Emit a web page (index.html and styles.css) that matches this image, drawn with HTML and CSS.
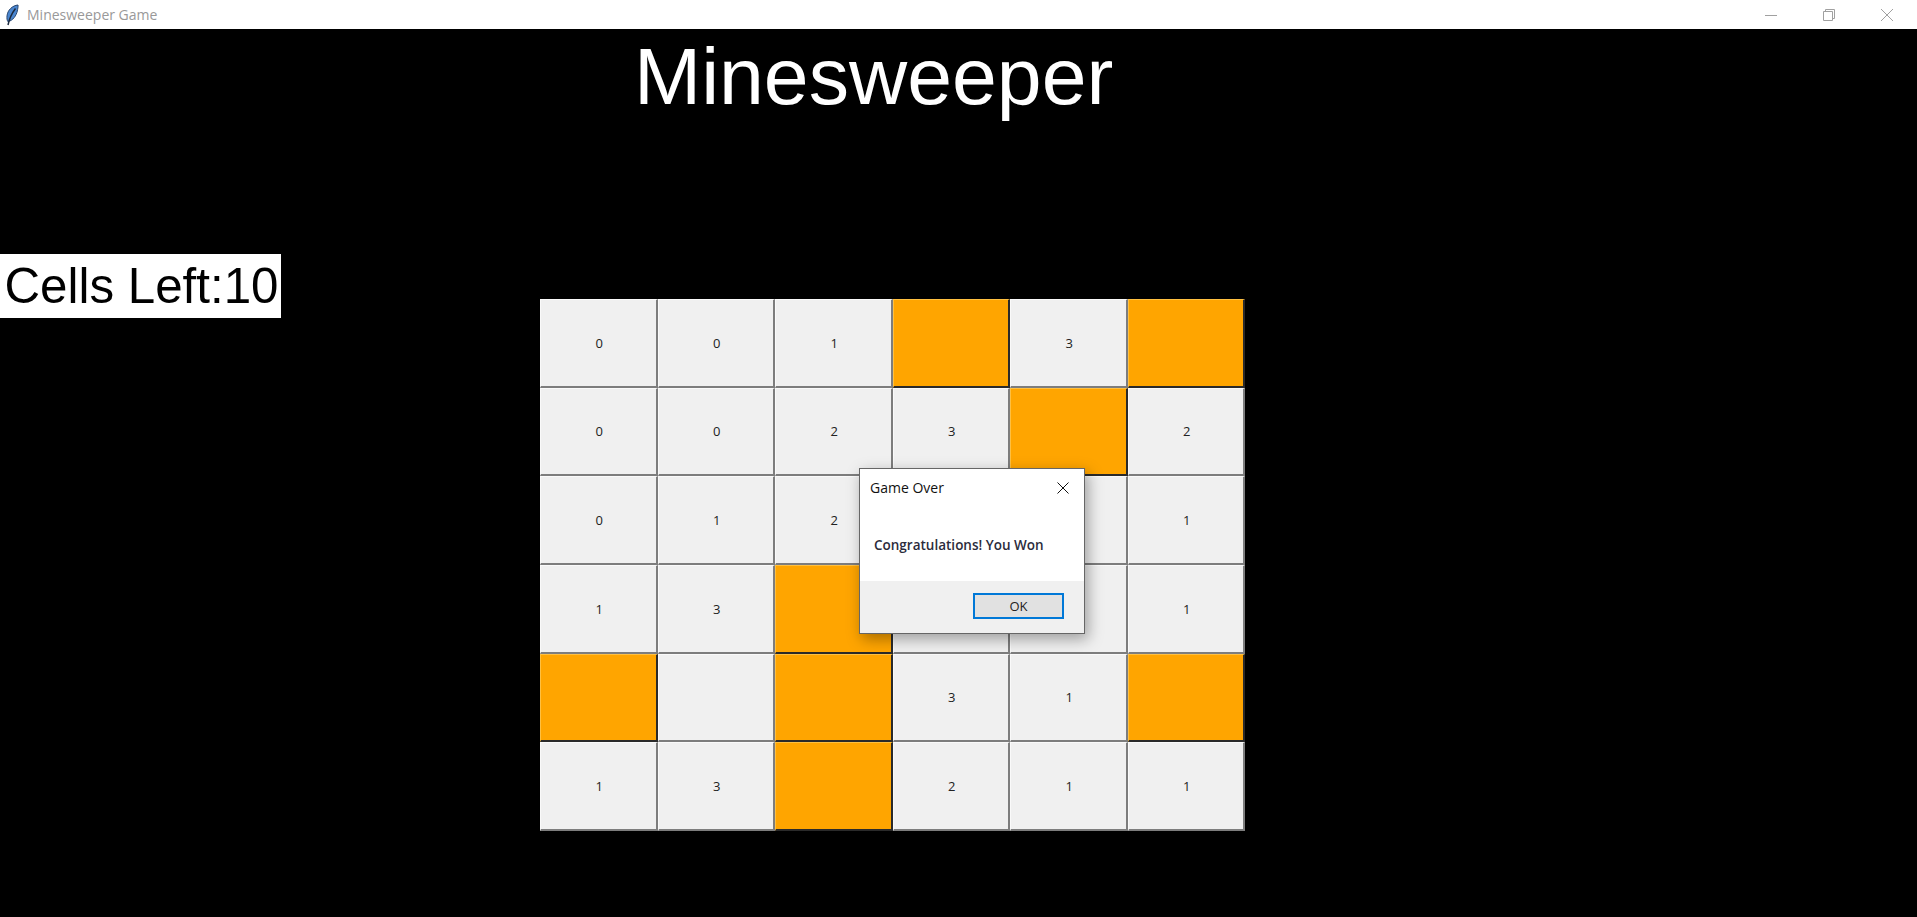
FILE: index.html
```html
<!DOCTYPE html>
<html>
<head>
    <title>Minesweeper Game</title>
    <link rel="stylesheet" href="styles.css">
</head>
<body>
    <div class="titlebar">
        <svg class="feather" width="14" height="22" viewBox="0 0 14 22">
            <path d="M13 1C7.500 1.500 2.500 6 2 12c-.2 2.400 0 4 .8 5.500C8 17 11.500 11 12.300 7c.4-2 1-4.500.7-6z" fill="#4a86d0" stroke="#27456f" stroke-width="1"/>
            <path d="M10.500 4.500C7 9 4.500 14 3 21" fill="none" stroke="#1c2a3e" stroke-width="1.500"/>
        </svg>
        <span class="app-title">Minesweeper Game</span>
        <div class="win-buttons">
            <svg width="14" height="14" viewBox="0 0 14 14"><path d="M1 7.500h12" stroke="#a0a0a0" fill="none"/></svg>
            <svg width="14" height="14" viewBox="0 0 14 14"><path d="M1.500 3.500h9v9h-9zM3.500 3.500v-2h9v9h-2" stroke="#a0a0a0" fill="none"/></svg>
            <svg width="14" height="14" viewBox="0 0 14 14"><path d="M1 1l12 12M13 1L1 13" stroke="#a0a0a0" fill="none"/></svg>
        </div>
    </div>

    <h1 class="heading">Minesweeper</h1>
    <div class="cells-left">Cells Left:10</div>

    <div class="board">
        <div class="cell">0</div><div class="cell">0</div><div class="cell">1</div><div class="cell mine"></div><div class="cell">3</div><div class="cell mine"></div>
        <div class="cell">0</div><div class="cell">0</div><div class="cell">2</div><div class="cell">3</div><div class="cell mine"></div><div class="cell">2</div>
        <div class="cell">0</div><div class="cell">1</div><div class="cell">2</div><div class="cell">2</div><div class="cell">1</div><div class="cell">1</div>
        <div class="cell">1</div><div class="cell">3</div><div class="cell mine"></div><div class="cell">2</div><div class="cell">1</div><div class="cell">1</div>
        <div class="cell mine"></div><div class="cell"></div><div class="cell mine"></div><div class="cell">3</div><div class="cell">1</div><div class="cell mine"></div>
        <div class="cell">1</div><div class="cell">3</div><div class="cell mine"></div><div class="cell">2</div><div class="cell">1</div><div class="cell">1</div>
    </div>

    <div class="dialog">
        <div class="dialog-head">
            <span>Game Over</span>
            <svg width="14" height="14" viewBox="0 0 14 14"><path d="M1.500 1.500l11 11M12.500 1.500l-11 11" stroke="#111" fill="none"/></svg>
        </div>
        <div class="dialog-body">Congratulations! You Won</div>
        <div class="dialog-foot">
            <button class="ok-button">OK</button>
        </div>
    </div>
</body>
</html>
```

FILE: styles.css
```css
html, body {
    margin: 0;
    height: 917px;
    overflow: hidden;
}
body {
    background-color: black;
    font-family: "Liberation Sans", Arial, sans-serif;
    position: relative;
}
.titlebar {
    height: 29px;
    background-color: white;
    display: flex;
    align-items: center;
    padding-left: 5px;
    font-family: "Open Sans", sans-serif;
    font-size: 14px;
    color: #999;
}
.feather {
    margin-right: 8px;
}
.win-buttons {
    margin-left: auto;
    display: flex;
    gap: 44px;
    padding-right: 23px;
}
.heading {
    margin: 0;
    padding: 1px 0 0 634px;
    font-size: 80.6px;
    font-weight: normal;
    line-height: 92px;
    color: white;
}
.cells-left {
    box-sizing: border-box;
    width: 281px;
    height: 64px;
    margin-top: 132px;
    padding-left: 2px;
    background-color: white;
    color: black;
    font-size: 49.3px;
    line-height: 63px;
    text-align: center;
}
.board {
    width: 705px;
    height: 532px;
    margin: -19px 0 0 540px;
    display: grid;
    grid-template-columns: repeat(6, 1fr);
    grid-template-rows: repeat(6, 1fr);
}
.cell {
    background-color: #f0f0f0;
    border: 2px solid;
    border-color: #fafafa #7d7d7d #7d7d7d #fafafa;
    border-width: 1px 2px 2px 1px;
    padding-left: 2px;
    display: flex;
    align-items: center;
    justify-content: center;
    font-family: "Open Sans", sans-serif;
    font-size: 13px;
    color: #222;
}
.mine {
    background-color: #ffa500;
    border-color: #ffc040 #2a2a2a #2a2a2a #ffc040;
}
.dialog {
    position: absolute;
    left: 859px;
    top: 468px;
    width: 226px;
    height: 166px;
    box-sizing: border-box;
    border: 1px solid #666;
    background-color: white;
    box-shadow: 3px 5px 14px rgba(0,0,0,0.35);
    display: flex;
    flex-direction: column;
    font-family: "Open Sans", sans-serif;
    color: #111;
}
.dialog-head {
    display: flex;
    justify-content: space-between;
    align-items: center;
    padding: 9px 14px 0 10px;
    font-size: 14px;
}
.dialog-body {
    flex: 1;
    padding: 39px 14px 0;
    font-size: 13.5px;
    font-weight: 600;
    color: #2c2c3c;
}
.dialog-foot {
    height: 52px;
    background-color: #f0f0f0;
    display: flex;
    justify-content: flex-end;
    align-items: flex-start;
    padding: 12px 20px 0 0;
    box-sizing: border-box;
}
.ok-button {
    width: 91px;
    height: 26px;
    border: 2px solid #0078d7;
    background-color: #e1e1e1;
    font-family: "Open Sans", sans-serif;
    font-size: 13px;
    color: #222;
    padding: 0;
}
```
